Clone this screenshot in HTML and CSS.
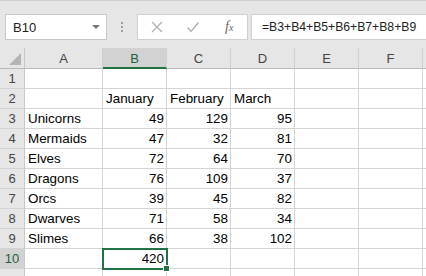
FILE: index.html
```html
<!DOCTYPE html>
<html lang="en">
<head>
    <meta charset="UTF-8">
    <title>Sheet</title>
    <link rel="stylesheet" href="styles.css">
</head>
<body>

<div class="toolbar">
    <div class="namebox">
        <span class="name">B10</span>
        <span class="arrow"></span>
    </div>
    <div class="grip"><i></i><i></i><i></i></div>
    <div class="fbuttons">
        <svg class="ico" width="14" height="14" viewBox="0 0 14 14"><path d="M2 2L12 12M12 2L2 12" stroke="#b3b3b3" stroke-width="1.4" fill="none"/></svg>
        <svg class="ico" width="14" height="14" viewBox="0 0 14 14"><path d="M1.5 7.5L5 11.5L12.5 2.5" stroke="#b3b3b3" stroke-width="1.4" fill="none"/></svg>
        <span class="fx">f<span>x</span></span>
    </div>
    <div class="formula">=B3+B4+B5+B6+B7+B8+B9</div>
</div>

<div class="sheet">
    <div class="hd corner"><span class="tri"></span></div>
    <div class="hd">A</div>
    <div class="hd sel">B</div>
    <div class="hd">C</div>
    <div class="hd">D</div>
    <div class="hd">E</div>
    <div class="hd">F</div>
    <div class="hd"></div>

    <div class="rh">1</div><div class="c"></div><div class="c"></div><div class="c"></div><div class="c"></div><div class="c"></div><div class="c"></div><div class="c"></div>
    <div class="rh">2</div><div class="c"></div><div class="c">January</div><div class="c">February</div><div class="c">March</div><div class="c"></div><div class="c"></div><div class="c"></div>
    <div class="rh">3</div><div class="c">Unicorns</div><div class="c n">49</div><div class="c n">129</div><div class="c n">95</div><div class="c"></div><div class="c"></div><div class="c"></div>
    <div class="rh">4</div><div class="c">Mermaids</div><div class="c n">47</div><div class="c n">32</div><div class="c n">81</div><div class="c"></div><div class="c"></div><div class="c"></div>
    <div class="rh">5</div><div class="c">Elves</div><div class="c n">72</div><div class="c n">64</div><div class="c n">70</div><div class="c"></div><div class="c"></div><div class="c"></div>
    <div class="rh">6</div><div class="c">Dragons</div><div class="c n">76</div><div class="c n">109</div><div class="c n">37</div><div class="c"></div><div class="c"></div><div class="c"></div>
    <div class="rh">7</div><div class="c">Orcs</div><div class="c n">39</div><div class="c n">45</div><div class="c n">82</div><div class="c"></div><div class="c"></div><div class="c"></div>
    <div class="rh">8</div><div class="c">Dwarves</div><div class="c n">71</div><div class="c n">58</div><div class="c n">34</div><div class="c"></div><div class="c"></div><div class="c"></div>
    <div class="rh">9</div><div class="c">Slimes</div><div class="c n">66</div><div class="c n">38</div><div class="c n">102</div><div class="c"></div><div class="c"></div><div class="c"></div>
    <div class="rh sel">10</div><div class="c"></div><div class="c n active">420</div><div class="c"></div><div class="c"></div><div class="c"></div><div class="c"></div><div class="c"></div>
    <div class="rh"></div><div class="c"></div><div class="c"></div><div class="c"></div><div class="c"></div><div class="c"></div><div class="c"></div><div class="c"></div>
</div>

</body>
</html>
```

FILE: styles.css
```css
body {
    margin: 0;
    width: 426px;
    height: 276px;
    overflow: hidden;
    background: #fff;
    font-family: "Liberation Sans", Arial, sans-serif;
    color: #000;
}
.toolbar {
    height: 48px;
    background: #e6e6e6;
    border-top: 1px solid #d0d0d0;
    box-sizing: border-box;
    display: flex;
    align-items: flex-start;
    padding-top: 13px;
}
.namebox {
    margin-left: 5px;
    width: 102px;
    height: 26px;
    box-sizing: border-box;
    background: #fff;
    border: 1px solid #c8c8c8;
    display: flex;
    align-items: center;
    justify-content: space-between;
    padding: 0 6px 0 7px;
}
.name {
    font-size: 13px;
    color: #222;
}
.arrow {
    width: 0;
    height: 0;
    border-left: 4px solid transparent;
    border-right: 4px solid transparent;
    border-top: 4px solid #777;
}
.grip {
    width: 30px;
    height: 26px;
    display: flex;
    flex-direction: column;
    align-items: center;
    justify-content: center;
    gap: 2px;
}
.grip i {
    width: 2px;
    height: 2px;
    background: #a0a0a0;
}
.fbuttons {
    width: 111px;
    height: 26px;
    box-sizing: border-box;
    background: #fff;
    border: 1px solid #d0d0d0;
    display: flex;
    align-items: center;
    padding-left: 12px;
    gap: 22px;
}
.fx {
    font-family: "Liberation Serif", serif;
    font-style: italic;
    font-size: 14px;
    color: #666;
    margin-left: 3px;
}
.fx span {
    font-size: 10px;
}
.formula {
    margin-left: 3px;
    flex: 1;
    height: 26px;
    box-sizing: border-box;
    background: #fff;
    border: 1px solid #d0d0d0;
    border-right: none;
    font-size: 12.2px;
    line-height: 24px;
    padding-left: 10px;
    color: #222;
}
.sheet {
    display: grid;
    grid-template-columns: 25px 78px repeat(5, 64px) 1fr;
    grid-template-rows: 21px;
    grid-auto-rows: 20px;
    font-size: 13.4px;
}
.hd {
    background: #e6e6e6;
    border-right: 1px solid #d0d0d0;
    border-bottom: 1px solid #b8b8b8;
    box-sizing: border-box;
    text-align: center;
    line-height: 21px;
    color: #444;
    font-size: 13px;
}
.hd.sel {
    background: #d2d2d2;
    color: #1e5f3b;
    border-bottom: 2px solid #217346;
}
.corner {
    position: relative;
    border-right: 1px solid #c8c8c8;
}
.tri {
    position: absolute;
    right: 3px;
    bottom: 3px;
    width: 0;
    height: 0;
    border-left: 12px solid transparent;
    border-bottom: 12px solid #b4b4b4;
}
.rh {
    background: #e6e6e6;
    border-right: 1px solid #c8c8c8;
    border-bottom: 1px solid #d4d4d4;
    box-sizing: border-box;
    text-align: center;
    line-height: 20px;
    color: #444;
    font-size: 13px;
}
.rh.sel {
    background: #d2d2d2;
    color: #1e5f3b;
}
.c {
    border-right: 1px solid #d4d4d4;
    border-bottom: 1px solid #d4d4d4;
    box-sizing: border-box;
    line-height: 20px;
    padding: 0 3px;
    white-space: nowrap;
}
.n {
    text-align: right;
    padding-right: 2px;
}
.active {
    position: relative;
    outline: 2px solid #217346;
    outline-offset: -1px;
    z-index: 1;
}
.active::after {
    content: "";
    position: absolute;
    right: -4px;
    bottom: -4px;
    width: 5px;
    height: 5px;
    background: #217346;
    border: 1px solid #fff;
}
```
